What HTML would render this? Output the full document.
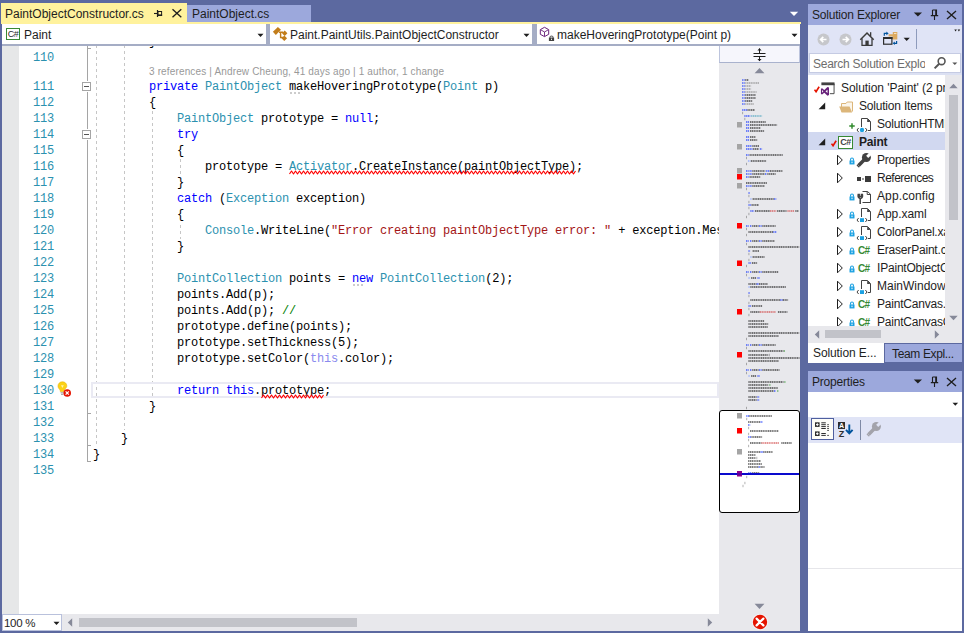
<!DOCTYPE html>
<html>
<head>
<meta charset="utf-8">
<title>PaintObjectConstructor.cs</title>
<style>
html,body{margin:0;padding:0;}
body{width:964px;height:633px;overflow:hidden;background:#5c69a0;position:relative;font-family:"Liberation Sans",sans-serif;font-size:12px;color:#1e1e1e;}
.abs{position:absolute;}
.ui{font-family:"Liberation Sans",sans-serif;font-size:12px;color:#1e1e1e;white-space:nowrap;line-height:14px;}
/* tabs */
#tabA{left:1px;top:3px;width:186px;height:21px;background:#fff29d;}
#tabB{left:187px;top:5px;width:124px;height:17px;background:#9ca8dc;}
#tabline{left:2px;top:22px;width:799px;height:2px;background:#fff29d;}
/* navbar */
#nav{left:2px;top:24px;width:798px;height:22px;background:#a5adc5;}
.dd{top:24px;height:20px;background:#fff;}
/* editor */
#editor{left:2px;top:46px;width:717px;height:568px;background:#fff;overflow:hidden;}
#lmargin{left:0;top:0;width:17px;height:568px;background:#e6e7e8;}
.ln{left:20px;width:32px;text-align:right;color:#2b91af;}
.code,.ln{position:absolute;font-family:"Liberation Mono",monospace;font-size:12px;letter-spacing:-0.2px;line-height:16px;height:16px;white-space:pre;}
.code{left:91px;color:#000;}
.k{color:#0000ff;}
.kf{color:#8a8aee;}
.t{color:#2b91af;}
.s{color:#a31515;}
.c{color:#008000;}
.guide{position:absolute;width:1px;background-image:linear-gradient(to bottom,#c6c6c6 0,#c6c6c6 3px,transparent 3px,transparent 6px);background-size:1px 6px;background-repeat:repeat-y;}
#lens{font-family:"Liberation Sans",sans-serif;font-size:10px;letter-spacing:0.15px;line-height:14px;color:#999;white-space:nowrap;}
/* minimap */
#mini{left:719px;top:46px;width:81px;height:585px;background:#e8e8ec;}
/* bottom bar */
#hbar{left:2px;top:614px;width:718px;height:17px;background:#e8e8ec;}
/* right panels */
.ptitle{background:#9ca8dc;}
.ptool{background:#e0e4f6;}
.row{position:absolute;left:0;width:137px;height:18px;}
.row span{position:absolute;top:2px;font-size:12px;line-height:14px;white-space:nowrap;}
</style>
</head>
<body>

<!-- ===== document tabs ===== -->
<div id="tabA" class="abs"></div>
<div id="tabB" class="abs"></div>
<div id="tabline" class="abs"></div>
<div class="abs ui" style="left:5px;top:7px;">PaintObjectConstructor.cs</div>
<div class="abs ui" style="left:192px;top:7px;">PaintObject.cs</div>

<!-- ===== nav bar ===== -->
<div id="nav" class="abs"></div>
<div class="abs dd" style="left:2px;width:264px;"></div>
<div class="abs dd" style="left:270px;width:262px;"></div>
<div class="abs dd" style="left:537px;width:263px;"></div>
<div class="abs ui" style="left:24px;top:28px;">Paint</div>
<div class="abs ui" style="left:290px;top:28px;">Paint.PaintUtils.PaintObjectConstructor</div>
<div class="abs ui" style="left:557px;top:28px;">makeHoveringPrototype(Point p)</div>

<!-- tab pin -->
<svg class="abs" style="left:153px;top:9px" width="11" height="10" viewBox="0 0 11 10">
<path d="M1 4.5 H4.5" stroke="#1e1e1e" stroke-width="1.1" fill="none"/>
<path d="M4.5 1 V8" stroke="#1e1e1e" stroke-width="1.2" fill="none"/>
<rect x="5" y="2.5" width="3.6" height="4" fill="none" stroke="#1e1e1e" stroke-width="1"/>
<rect x="4.6" y="5.4" width="4.5" height="1.6" fill="#1e1e1e"/>
</svg>
<!-- tab close X -->
<svg class="abs" style="left:171px;top:8px" width="12" height="11" viewBox="0 0 12 11">
<path d="M1.5 1.3 L10.3 9.2 M10.3 1.3 L1.5 9.2" stroke="#1e1e1e" stroke-width="1.35" fill="none"/>
</svg>
<!-- tab overflow arrow (white) -->
<svg class="abs" style="left:789px;top:11px" width="10" height="6" viewBox="0 0 10 6"><path d="M0.8 0.8 H9.2 L5 5 Z" fill="#ffffff"/></svg>
<!-- C# project icon in nav -->
<div class="abs" style="left:6px;top:28px;width:12px;height:10px;border:1px solid #388a34;background:#fff;"></div>
<div class="abs" style="left:7px;top:29px;width:12px;height:10px;font-family:'Liberation Sans',sans-serif;font-weight:normal;font-size:9px;line-height:10px;letter-spacing:-0.6px;color:#2d2d2d;text-align:center;">C#</div>
<!-- class icon -->
<svg class="abs" style="left:272px;top:26px" width="16" height="16" viewBox="0 0 16 16">
<path d="M5.9 1 L9 3.7 L3.8 9 L0.9 5.8 Z" fill="#c27d1a"/>
<path d="M7 6.3 H11 M8.6 6.3 V11.5 H11" stroke="#c27d1a" stroke-width="1.4" fill="none"/>
<path d="M12.7 4.5 L15.4 7.2 L12.7 9.9 L10 7.2 Z" fill="#c27d1a"/>
<path d="M12.3 9.5 L15.1 12.3 L12.3 15.1 L9.5 12.3 Z" fill="#c27d1a"/>
</svg>
<!-- method icon (private) -->
<svg class="abs" style="left:538px;top:26px" width="18" height="16" viewBox="0 0 18 16">
<path d="M6.5 1.3 L10.7 3.6 V8.3 L6.5 10.6 L2.3 8.3 V3.6 Z" fill="#fff" stroke="#68217a" stroke-width="1"/>
<path d="M6.5 10.4 V6 L2.9 3.9 M6.5 6 L10.1 3.9" stroke="#68217a" stroke-width="0.9" fill="none"/>
<rect x="10.9" y="11.6" width="5.2" height="3.4" fill="#424242"/>
<path d="M12 11.8 V10.9 Q12 10.1 13.5 10.1 Q15 10.1 15 10.9 V11.8" stroke="#424242" stroke-width="1" fill="none"/>
<rect x="13" y="12.7" width="1" height="1.2" fill="#fff"/>
</svg>
<!-- nav dropdown arrows -->
<svg class="abs" style="left:257px;top:33px" width="8" height="5" viewBox="0 0 8 5"><path d="M0.5 0.8 H6.5 L3.5 4 Z" fill="#1e1e1e"/></svg>
<svg class="abs" style="left:523px;top:33px" width="8" height="5" viewBox="0 0 8 5"><path d="M0.5 0.8 H6.5 L3.5 4 Z" fill="#1e1e1e"/></svg>
<svg class="abs" style="left:791px;top:33px" width="8" height="5" viewBox="0 0 8 5"><path d="M0.5 0.8 H6.5 L3.5 4 Z" fill="#1e1e1e"/></svg>

<!-- ===== editor ===== -->
<div id="editor" class="abs">
  <div id="lmargin" class="abs"></div>
  <div class="code" style="top:-12px">        }</div>
<div class="ln" style="top:4px">110</div>
<div class="ln" style="top:33px">111</div>
<div class="code" style="top:33px">        <span class="k">private</span> <span class="t">PaintObject</span> makeHoveringPrototype(<span class="t">Point</span> p)</div>
<div class="ln" style="top:49px">112</div>
<div class="code" style="top:49px">        {</div>
<div class="ln" style="top:65px">113</div>
<div class="code" style="top:65px">            <span class="t">PaintObject</span> prototype = <span class="k">null</span>;</div>
<div class="ln" style="top:81px">114</div>
<div class="code" style="top:81px">            <span class="k">try</span></div>
<div class="ln" style="top:97px">115</div>
<div class="code" style="top:97px">            {</div>
<div class="ln" style="top:113px">116</div>
<div class="code" style="top:113px">                prototype = <span class="t">Activator</span>.CreateInstance(paintObjectType);</div>
<div class="ln" style="top:129px">117</div>
<div class="code" style="top:129px">            }</div>
<div class="ln" style="top:145px">118</div>
<div class="code" style="top:145px">            <span class="k">catch</span> (<span class="t">Exception</span> exception)</div>
<div class="ln" style="top:161px">119</div>
<div class="code" style="top:161px">            {</div>
<div class="ln" style="top:177px">120</div>
<div class="code" style="top:177px">                <span class="t">Console</span>.WriteLine(<span class="s">&quot;Error creating paintObjectType error: &quot;</span> + exception.Message);</div>
<div class="ln" style="top:193px">121</div>
<div class="code" style="top:193px">            }</div>
<div class="ln" style="top:209px">122</div>
<div class="ln" style="top:225px">123</div>
<div class="code" style="top:225px">            <span class="t">PointCollection</span> points = <span class="k">new</span> <span class="t">PointCollection</span>(2);</div>
<div class="ln" style="top:241px">124</div>
<div class="code" style="top:241px">            points.Add(p);</div>
<div class="ln" style="top:257px">125</div>
<div class="code" style="top:257px">            points.Add(p); <span class="c">//</span></div>
<div class="ln" style="top:273px">126</div>
<div class="code" style="top:273px">            prototype.define(points);</div>
<div class="ln" style="top:289px">127</div>
<div class="code" style="top:289px">            prototype.setThickness(5);</div>
<div class="ln" style="top:305px">128</div>
<div class="code" style="top:305px">            prototype.setColor(<span class="kf">this</span>.color);</div>
<div class="ln" style="top:321px">129</div>
<div class="ln" style="top:337px">130</div>
<div class="code" style="top:337px">            <span class="k">return</span> <span class="k">this</span>.prototype;</div>
<div class="ln" style="top:353px">131</div>
<div class="code" style="top:353px">        }</div>
<div class="ln" style="top:369px">132</div>
<div class="ln" style="top:385px">133</div>
<div class="code" style="top:385px">    }</div>
<div class="ln" style="top:401px">134</div>
<div class="code" style="top:401px">}</div>
<div class="ln" style="top:417px">135</div><div class="guide" style="left:94px;top:0px;height:399px;background-position:0 5px"></div>
<div class="guide" style="left:122px;top:0px;height:384px;background-position:0 5px"></div>
<div class="guide" style="left:150px;top:65px;height:288px;background-position:0 0px"></div>
<div class="guide" style="left:178px;top:113px;height:16px;background-position:0 0px"></div>
<div class="guide" style="left:178px;top:177px;height:16px;background-position:0 2px"></div>
<div class="abs" style="left:85px;top:0px;width:1px;height:35px;background:#a5a5a5"></div>
<div class="abs" style="left:85px;top:46px;width:1px;height:37px;background:#a5a5a5"></div>
<div class="abs" style="left:85px;top:94px;width:1px;height:322px;background:#a5a5a5"></div>
<div class="abs" style="left:85px;top:2px;width:4px;height:1px;background:#a5a5a5"></div>
<div class="abs" style="left:85px;top:367px;width:4px;height:1px;background:#a5a5a5"></div>
<div class="abs" style="left:85px;top:399px;width:4px;height:1px;background:#a5a5a5"></div>
<div class="abs" style="left:85px;top:415px;width:4px;height:1px;background:#a5a5a5"></div>
<div class="abs" style="left:80px;top:36px;width:7px;height:7px;border:1px solid #a5a5a5;background:#fff"><div class="abs" style="left:1px;top:3px;width:5px;height:1px;background:#555"></div></div>
<div class="abs" style="left:80px;top:84px;width:7px;height:7px;border:1px solid #a5a5a5;background:#fff"><div class="abs" style="left:1px;top:3px;width:5px;height:1px;background:#555"></div></div>
<div class="abs" id="lens" style="left:147px;top:19px;">3 references | Andrew Cheung, 41 days ago | 1 author, 1 change</div>
<div class="abs" style="left:89px;top:336px;width:624px;height:12px;border:2px solid #eaeaf3;"></div>
<svg class="abs" style="left:0;top:0" width="717" height="568" shape-rendering="auto"><path d="M287.5 128 L289.5 125 L291.5 128 L293.5 125 L295.5 128 L297.5 125 L299.5 128 L301.5 125 L303.5 128 L305.5 125 L307.5 128 L309.5 125 L311.5 128 L313.5 125 L315.5 128 L317.5 125 L319.5 128 L321.5 125 L323.5 128 L325.5 125 L327.5 128 L329.5 125 L331.5 128 L333.5 125 L335.5 128 L337.5 125 L339.5 128 L341.5 125 L343.5 128 L345.5 125 L347.5 128 L349.5 125 L351.5 128 L353.5 125 L355.5 128 L357.5 125 L359.5 128 L361.5 125 L363.5 128 L365.5 125 L367.5 128 L369.5 125 L371.5 128 L373.5 125 L375.5 128 L377.5 125 L379.5 128 L381.5 125 L383.5 128 L385.5 125 L387.5 128 L389.5 125 L391.5 128 L393.5 125 L395.5 128 L397.5 125 L399.5 128 L401.5 125 L403.5 128 L405.5 125 L407.5 128 L409.5 125 L411.5 128 L413.5 125 L415.5 128 L417.5 125 L419.5 128 L421.5 125 L423.5 128 L425.5 125 L427.5 128 L429.5 125 L431.5 128 L433.5 125 L435.5 128 L437.5 125 L439.5 128 L441.5 125 L443.5 128 L445.5 125 L447.5 128 L449.5 125 L451.5 128 L453.5 125 L455.5 128 L457.5 125 L459.5 128 L461.5 125 L463.5 128 L465.5 125 L467.5 128 L469.5 125 L471.5 128 L473.5 125 L475.5 128 L477.5 125 L479.5 128 L481.5 125 L483.5 128 L485.5 125 L487.5 128 L489.5 125 L491.5 128 L493.5 125 L495.5 128 L497.5 125 L499.5 128 L501.5 125 L503.5 128 L505.5 125 L507.5 128 L509.5 125 L511.5 128 L513.5 125 L515.5 128 L517.5 125 L519.5 128 L521.5 125 L523.5 128 L525.5 125 L527.5 128 L529.5 125 L531.5 128 L533.5 125 L535.5 128 L537.5 125 L539.5 128 L541.5 125 L543.5 128 L545.5 125 L547.5 128 L549.5 125 L551.5 128 L553.5 125 L555.5 128 L557.5 125 L559.5 128 L561.5 125 L563.5 128 L565.5 125 L567.5 128 L569.5 125 L571.5 128 L573.5 125" fill="none" stroke="#ff0000" stroke-width="1.15" stroke-linejoin="round"/><path d="M259.5 352 L261.5 349 L263.5 352 L265.5 349 L267.5 352 L269.5 349 L271.5 352 L273.5 349 L275.5 352 L277.5 349 L279.5 352 L281.5 349 L283.5 352 L285.5 349 L287.5 352 L289.5 349 L291.5 352 L293.5 349 L295.5 352 L297.5 349 L299.5 352 L301.5 349 L303.5 352 L305.5 349 L307.5 352 L309.5 349 L311.5 352 L313.5 349 L315.5 352 L317.5 349 L319.5 352 L321.5 349" fill="none" stroke="#ff0000" stroke-width="1.15" stroke-linejoin="round"/><rect x="288" y="46.5" width="2" height="1" fill="#9a9a9a"/><rect x="292" y="46.5" width="2" height="1" fill="#9a9a9a"/><rect x="296" y="46.5" width="2" height="1" fill="#9a9a9a"/><rect x="351" y="238.5" width="2" height="1" fill="#9a9a9a"/><rect x="355" y="238.5" width="2" height="1" fill="#9a9a9a"/><rect x="359" y="238.5" width="2" height="1" fill="#9a9a9a"/></svg>
<svg class="abs" style="left:55px;top:335px" width="16" height="18" viewBox="0 0 16 18">
<path d="M5.5 0.8 C2.6 0.8 1 2.9 1 5 C1 6.6 1.9 7.5 2.7 8.6 C3.2 9.3 3.3 9.8 3.3 10.6 L6.6 10.6 C6.7 9.6 7.2 9 8 8 C9 6.9 9.8 6.2 9.8 4.8 C9.8 2.6 8 0.8 5.5 0.8 Z" fill="#fcd116" stroke="#e8b708" stroke-width="0.6"/>
<path d="M4 4.2 L6.8 4.2 L5.4 7 Z" fill="#fff4b0"/>
<rect x="3.6" y="11.3" width="3" height="1" fill="#9a9a9a"/><rect x="4" y="12.8" width="2.2" height="1" fill="#9a9a9a"/>
<circle cx="10.2" cy="12" r="3.8" fill="#e51400"/>
<path d="M8.6 10.4 L11.8 13.6 M11.8 10.4 L8.6 13.6" stroke="#fff" stroke-width="1.3"/>
</svg>
</div>

<!-- ===== minimap ===== -->
<div id="mini" class="abs"><div class="abs" style="left:0;top:0;width:79px;height:16px;background:#f6f6fc;border:1px solid #bcc4dd;border-top:none;border-bottom:1px solid #a9b2cd;"></div>
<svg class="abs" style="left:34px;top:1px" width="13" height="15" viewBox="0 0 13 15"><path d="M0.5 6.5 H12.5 M0.5 9.5 H12.5" stroke="#1e1e1e" stroke-width="1"/><path d="M6.5 1.5 V6 M6.5 10 V14" stroke="#1e1e1e" stroke-width="1"/><path d="M4.4 3.6 L6.5 1.2 L8.6 3.6 Z M4.4 11.9 L6.5 14.3 L8.6 11.9 Z" fill="#1e1e1e"/></svg>
<svg class="abs" style="left:35px;top:21px" width="11" height="7" viewBox="0 0 11 7"><path d="M0.6 6.2 L5.5 0.9 L10.4 6.2 Z" fill="#868999"/></svg>
<svg class="abs" style="left:35px;top:557px" width="11" height="7" viewBox="0 0 11 7"><path d="M0.6 0.8 L5.5 6.1 L10.4 0.8 Z" fill="#868999"/></svg>
<svg class="abs" style="left:32px;top:567px" width="18" height="18" viewBox="0 0 18 18"><circle cx="9" cy="9" r="8" fill="#f4f4f8"/><circle cx="9" cy="9" r="7.2" fill="#e51400"/><path d="M5.6 5.6 L12.4 12.4 M12.4 5.6 L5.6 12.4" stroke="#fff" stroke-width="2.2" stroke-linecap="round"/></svg>
<div class="abs" style="left:0;top:364px;width:79px;height:101px;background:#fff;border:1px solid #000;border-radius:3px;"></div>
<svg class="abs" style="left:0;top:0" width="81" height="585"><path d="M23.1 34.0 h2.6" stroke="#1030ff" stroke-width="1.45" stroke-dasharray="1.3 0.5" opacity="0.75"/><path d="M26.2 34.0 h3.5" stroke="#111111" stroke-width="1.45" stroke-dasharray="1.3 0.5" opacity="0.72"/><path d="M23.1 37.0 h2.6" stroke="#1030ff" stroke-width="1.45" stroke-dasharray="1.3 0.5" opacity="0.75"/><path d="M26.2 37.0 h13.8" stroke="#8a8a8a" stroke-width="1.45" stroke-dasharray="1.3 0.5" opacity="0.75"/><path d="M23.1 40.0 h2.6" stroke="#1030ff" stroke-width="1.45" stroke-dasharray="1.3 0.5" opacity="0.75"/><path d="M26.2 40.0 h5.9" stroke="#8a8a8a" stroke-width="1.45" stroke-dasharray="1.3 0.5" opacity="0.75"/><path d="M23.1 43.0 h2.6" stroke="#1030ff" stroke-width="1.45" stroke-dasharray="1.3 0.5" opacity="0.75"/><path d="M26.2 43.0 h5.9" stroke="#8a8a8a" stroke-width="1.45" stroke-dasharray="1.3 0.5" opacity="0.75"/><path d="M23.1 46.0 h2.6" stroke="#1030ff" stroke-width="1.45" stroke-dasharray="1.3 0.5" opacity="0.75"/><path d="M26.2 46.0 h11.4" stroke="#8a8a8a" stroke-width="1.45" stroke-dasharray="1.3 0.5" opacity="0.75"/><path d="M23.1 49.0 h2.6" stroke="#1030ff" stroke-width="1.45" stroke-dasharray="1.3 0.5" opacity="0.75"/><path d="M26.2 49.0 h10.6" stroke="#111111" stroke-width="1.45" stroke-dasharray="1.3 0.5" opacity="0.72"/><path d="M23.1 52.0 h2.6" stroke="#1030ff" stroke-width="1.45" stroke-dasharray="1.3 0.5" opacity="0.75"/><path d="M26.2 52.0 h10.6" stroke="#111111" stroke-width="1.45" stroke-dasharray="1.3 0.5" opacity="0.72"/><path d="M23.1 55.0 h2.6" stroke="#1030ff" stroke-width="1.45" stroke-dasharray="1.3 0.5" opacity="0.75"/><path d="M26.2 55.0 h7.4" stroke="#111111" stroke-width="1.45" stroke-dasharray="1.3 0.5" opacity="0.72"/><path d="M23.1 58.0 h2.6" stroke="#1030ff" stroke-width="1.45" stroke-dasharray="1.3 0.5" opacity="0.75"/><path d="M26.2 58.0 h9.0" stroke="#8a8a8a" stroke-width="1.45" stroke-dasharray="1.3 0.5" opacity="0.75"/><path d="M23.1 64.0 h5.0" stroke="#1030ff" stroke-width="1.45" stroke-dasharray="1.3 0.5" opacity="0.75"/><path d="M28.4 64.0 h7.6" stroke="#111111" stroke-width="1.45" stroke-dasharray="1.3 0.5" opacity="0.72"/><rect x="23.1" y="65.8" width="1" height="2.4" fill="#555" opacity="0.45"/><path d="M25.3 70.0 h6.0" stroke="#1030ff" stroke-width="1.45" stroke-dasharray="1.3 0.5" opacity="0.75"/><path d="M32.1 70.0 h11.0" stroke="#4aa3bf" stroke-width="1.45" stroke-dasharray="1.3 0.5" opacity="0.75"/><rect x="25.3" y="71.8" width="1" height="2.4" fill="#555" opacity="0.45"/><path d="M27.0 76.0 h3.5" stroke="#1030ff" stroke-width="1.45" stroke-dasharray="1.3 0.5" opacity="0.75"/><path d="M31.0 76.0 h16.1" stroke="#111111" stroke-width="1.45" stroke-dasharray="1.3 0.5" opacity="0.72"/><path d="M27.0 79.0 h3.5" stroke="#1030ff" stroke-width="1.45" stroke-dasharray="1.3 0.5" opacity="0.75"/><path d="M31.0 79.0 h27.1" stroke="#111111" stroke-width="1.45" stroke-dasharray="1.3 0.5" opacity="0.72"/><path d="M27.0 82.0 h3.5" stroke="#1030ff" stroke-width="1.45" stroke-dasharray="1.3 0.5" opacity="0.75"/><path d="M31.0 82.0 h10.5" stroke="#111111" stroke-width="1.45" stroke-dasharray="1.3 0.5" opacity="0.72"/><path d="M27.0 85.0 h3.5" stroke="#1030ff" stroke-width="1.45" stroke-dasharray="1.3 0.5" opacity="0.75"/><path d="M31.0 85.0 h14.5" stroke="#111111" stroke-width="1.45" stroke-dasharray="1.3 0.5" opacity="0.72"/><path d="M27.0 91.0 h3.5" stroke="#1030ff" stroke-width="1.45" stroke-dasharray="1.3 0.5" opacity="0.75"/><path d="M31.0 91.0 h5.8" stroke="#111111" stroke-width="1.45" stroke-dasharray="1.3 0.5" opacity="0.72"/><path d="M27.0 94.0 h3.5" stroke="#1030ff" stroke-width="1.45" stroke-dasharray="1.3 0.5" opacity="0.75"/><path d="M31.0 94.0 h7.4" stroke="#111111" stroke-width="1.45" stroke-dasharray="1.3 0.5" opacity="0.72"/><path d="M27.0 100.0 h5.9" stroke="#1030ff" stroke-width="1.45" stroke-dasharray="1.3 0.5" opacity="0.75"/><path d="M33.3 100.0 h6.7" stroke="#111111" stroke-width="1.45" stroke-dasharray="1.3 0.5" opacity="0.72"/><path d="M27.0 103.0 h6.6" stroke="#1030ff" stroke-width="1.45" stroke-dasharray="1.3 0.5" opacity="0.75"/><path d="M34.1 103.0 h5.9" stroke="#111111" stroke-width="1.45" stroke-dasharray="1.3 0.5" opacity="0.72"/><path d="M40.8 103.0 h2.3" stroke="#1030ff" stroke-width="1.45" stroke-dasharray="1.3 0.5" opacity="0.75"/><path d="M27.0 109.0 h2.7" stroke="#1030ff" stroke-width="1.45" stroke-dasharray="1.3 0.5" opacity="0.75"/><path d="M30.5 109.0 h33.2" stroke="#111111" stroke-width="1.45" stroke-dasharray="1.3 0.5" opacity="0.72"/><rect x="27.0" y="110.8" width="1" height="2.4" fill="#555" opacity="0.45"/><path d="M28.9 115.0 h2.4" stroke="#7f9cff" stroke-width="1.45" stroke-dasharray="1.3 0.5" opacity="0.75"/><path d="M31.8 115.0 h15.3" stroke="#111111" stroke-width="1.45" stroke-dasharray="1.3 0.5" opacity="0.72"/><rect x="27.0" y="116.8" width="1" height="2.4" fill="#555" opacity="0.45"/><path d="M27.0 125.0 h2.7" stroke="#1030ff" stroke-width="1.45" stroke-dasharray="1.3 0.5" opacity="0.75"/><path d="M30.5 125.0 h2.4" stroke="#1030ff" stroke-width="1.45" stroke-dasharray="1.3 0.5" opacity="0.75"/><path d="M33.3 125.0 h13.0" stroke="#111111" stroke-width="1.45" stroke-dasharray="1.3 0.5" opacity="0.72"/><path d="M47.1 125.0 h3.1" stroke="#1030ff" stroke-width="1.45" stroke-dasharray="1.3 0.5" opacity="0.75"/><path d="M50.7 125.0 h13.0" stroke="#111111" stroke-width="1.45" stroke-dasharray="1.3 0.5" opacity="0.72"/><path d="M27.0 128.0 h2.7" stroke="#1030ff" stroke-width="1.45" stroke-dasharray="1.3 0.5" opacity="0.75"/><path d="M30.5 128.0 h2.4" stroke="#1030ff" stroke-width="1.45" stroke-dasharray="1.3 0.5" opacity="0.75"/><path d="M33.3 128.0 h12.2" stroke="#111111" stroke-width="1.45" stroke-dasharray="1.3 0.5" opacity="0.72"/><path d="M46.0 128.0 h1.9" stroke="#1030ff" stroke-width="1.45" stroke-dasharray="1.3 0.5" opacity="0.75"/><path d="M48.3 128.0 h8.3" stroke="#111111" stroke-width="1.45" stroke-dasharray="1.3 0.5" opacity="0.72"/><path d="M27.0 131.0 h2.7" stroke="#1030ff" stroke-width="1.45" stroke-dasharray="1.3 0.5" opacity="0.75"/><path d="M30.5 131.0 h11.0" stroke="#111111" stroke-width="1.45" stroke-dasharray="1.3 0.5" opacity="0.72"/><path d="M27.0 137.0 h20.9" stroke="#111111" stroke-width="1.45" stroke-dasharray="1.3 0.5" opacity="0.72"/><path d="M27.0 140.0 h2.7" stroke="#1030ff" stroke-width="1.45" stroke-dasharray="1.3 0.5" opacity="0.75"/><path d="M30.5 140.0 h2.4" stroke="#1030ff" stroke-width="1.45" stroke-dasharray="1.3 0.5" opacity="0.75"/><path d="M33.3 140.0 h12.2" stroke="#111111" stroke-width="1.45" stroke-dasharray="1.3 0.5" opacity="0.72"/><rect x="27.0" y="141.8" width="1" height="2.4" fill="#555" opacity="0.45"/><path d="M29.4 147.0 h1.6" stroke="#1030ff" stroke-width="1.45" stroke-dasharray="1.3 0.5" opacity="0.75"/><rect x="29.4" y="148.8" width="1" height="2.4" fill="#555" opacity="0.45"/><path d="M31.3 153.0 h1.6" stroke="#7f9cff" stroke-width="1.45" stroke-dasharray="1.3 0.5" opacity="0.75"/><path d="M33.6 153.0 h21.4" stroke="#111111" stroke-width="1.45" stroke-dasharray="1.3 0.5" opacity="0.72"/><path d="M55.0 153.0 h2.3" stroke="#1030ff" stroke-width="1.45" stroke-dasharray="1.3 0.5" opacity="0.75"/><rect x="29.4" y="154.8" width="1" height="2.4" fill="#555" opacity="0.45"/><path d="M29.4 159.0 h2.7" stroke="#1030ff" stroke-width="1.45" stroke-dasharray="1.3 0.5" opacity="0.75"/><path d="M32.5 159.0 h7.5" stroke="#111111" stroke-width="1.45" stroke-dasharray="1.3 0.5" opacity="0.72"/><rect x="29.4" y="160.8" width="1" height="2.4" fill="#555" opacity="0.45"/><path d="M31.3 165.0 h3.9" stroke="#1030ff" stroke-width="1.45" stroke-dasharray="1.3 0.5" opacity="0.75"/><path d="M36.0 165.0 h15.0" stroke="#111111" stroke-width="1.45" stroke-dasharray="1.3 0.5" opacity="0.72"/><path d="M51.0 165.0 h6.3" stroke="#d04040" stroke-width="1.45" stroke-dasharray="1.3 0.5" opacity="0.75"/><path d="M58.1 165.0 h9.5" stroke="#111111" stroke-width="1.45" stroke-dasharray="1.3 0.5" opacity="0.72"/><path d="M68.4 165.0 h7.1" stroke="#d04040" stroke-width="1.45" stroke-dasharray="1.3 0.5" opacity="0.75"/><path d="M76.3 165.0 h3.2" stroke="#111111" stroke-width="1.45" stroke-dasharray="1.3 0.5" opacity="0.72"/><rect x="29.4" y="166.8" width="1" height="2.4" fill="#555" opacity="0.45"/><rect x="27.0" y="169.8" width="1" height="2.4" fill="#555" opacity="0.45"/><path d="M27.0 180.0 h2.7" stroke="#1030ff" stroke-width="1.45" stroke-dasharray="1.3 0.5" opacity="0.75"/><path d="M31.0 180.0 h1.9" stroke="#1030ff" stroke-width="1.45" stroke-dasharray="1.3 0.5" opacity="0.75"/><path d="M33.2 180.0 h6.4" stroke="#111111" stroke-width="1.45" stroke-dasharray="1.3 0.5" opacity="0.72"/><path d="M40.0 180.0 h2.7" stroke="#1030ff" stroke-width="1.45" stroke-dasharray="1.3 0.5" opacity="0.75"/><path d="M43.3 180.0 h13.3" stroke="#111111" stroke-width="1.45" stroke-dasharray="1.3 0.5" opacity="0.72"/><rect x="27.0" y="181.8" width="1" height="2.4" fill="#555" opacity="0.45"/><path d="M29.4 186.0 h24.8" stroke="#111111" stroke-width="1.45" stroke-dasharray="1.3 0.5" opacity="0.72"/><path d="M54.2 186.0 h3.1" stroke="#1030ff" stroke-width="1.45" stroke-dasharray="1.3 0.5" opacity="0.75"/><rect x="27.0" y="187.8" width="1" height="2.4" fill="#555" opacity="0.45"/><path d="M27.0 195.0 h2.7" stroke="#1030ff" stroke-width="1.45" stroke-dasharray="1.3 0.5" opacity="0.75"/><path d="M31.0 195.0 h1.9" stroke="#1030ff" stroke-width="1.45" stroke-dasharray="1.3 0.5" opacity="0.75"/><path d="M33.2 195.0 h6.4" stroke="#111111" stroke-width="1.45" stroke-dasharray="1.3 0.5" opacity="0.72"/><path d="M40.0 195.0 h2.7" stroke="#1030ff" stroke-width="1.45" stroke-dasharray="1.3 0.5" opacity="0.75"/><path d="M43.3 195.0 h12.5" stroke="#111111" stroke-width="1.45" stroke-dasharray="1.3 0.5" opacity="0.72"/><rect x="27.0" y="196.8" width="1" height="2.4" fill="#555" opacity="0.45"/><path d="M29.4 201.0 h50.8" stroke="#111111" stroke-width="1.45" stroke-dasharray="1.3 0.5" opacity="0.72"/><path d="M29.4 205.0 h1.9" stroke="#1030ff" stroke-width="1.45" stroke-dasharray="1.3 0.5" opacity="0.75"/><path d="M33.6 205.0 h6.4" stroke="#111111" stroke-width="1.45" stroke-dasharray="1.3 0.5" opacity="0.72"/><rect x="29.4" y="206.8" width="1" height="2.4" fill="#555" opacity="0.45"/><path d="M31.3 211.0 h1.9" stroke="#7f9cff" stroke-width="1.45" stroke-dasharray="1.3 0.5" opacity="0.75"/><path d="M33.6 211.0 h11.9" stroke="#111111" stroke-width="1.45" stroke-dasharray="1.3 0.5" opacity="0.72"/><rect x="29.4" y="212.8" width="1" height="2.4" fill="#555" opacity="0.45"/><path d="M29.4 217.0 h2.7" stroke="#1030ff" stroke-width="1.45" stroke-dasharray="1.3 0.5" opacity="0.75"/><path d="M32.9 217.0 h5.5" stroke="#111111" stroke-width="1.45" stroke-dasharray="1.3 0.5" opacity="0.72"/><rect x="27.0" y="218.8" width="1" height="2.4" fill="#555" opacity="0.45"/><path d="M27.0 226.0 h2.7" stroke="#1030ff" stroke-width="1.45" stroke-dasharray="1.3 0.5" opacity="0.75"/><path d="M31.0 226.0 h1.9" stroke="#1030ff" stroke-width="1.45" stroke-dasharray="1.3 0.5" opacity="0.75"/><path d="M33.2 226.0 h6.4" stroke="#111111" stroke-width="1.45" stroke-dasharray="1.3 0.5" opacity="0.72"/><path d="M40.0 226.0 h2.7" stroke="#1030ff" stroke-width="1.45" stroke-dasharray="1.3 0.5" opacity="0.75"/><path d="M43.3 226.0 h16.4" stroke="#111111" stroke-width="1.45" stroke-dasharray="1.3 0.5" opacity="0.72"/><rect x="27.0" y="227.8" width="1" height="2.4" fill="#555" opacity="0.45"/><path d="M29.4 232.0 h1.6" stroke="#7f9cff" stroke-width="1.45" stroke-dasharray="1.3 0.5" opacity="0.75"/><path d="M32.1 232.0 h5.5" stroke="#111111" stroke-width="1.45" stroke-dasharray="1.3 0.5" opacity="0.72"/><path d="M38.4 232.0 h2.4" stroke="#1030ff" stroke-width="1.45" stroke-dasharray="1.3 0.5" opacity="0.75"/><path d="M29.4 238.0 h8.2" stroke="#111111" stroke-width="1.45" stroke-dasharray="1.3 0.5" opacity="0.72"/><path d="M37.6 238.0 h2.4" stroke="#1030ff" stroke-width="1.45" stroke-dasharray="1.3 0.5" opacity="0.75"/><path d="M40.0 238.0 h8.7" stroke="#111111" stroke-width="1.45" stroke-dasharray="1.3 0.5" opacity="0.72"/><path d="M29.4 241.0 h1.9" stroke="#7f9cff" stroke-width="1.45" stroke-dasharray="1.3 0.5" opacity="0.75"/><path d="M31.3 241.0 h35.5" stroke="#111111" stroke-width="1.45" stroke-dasharray="1.3 0.5" opacity="0.72"/><path d="M29.4 247.0 h1.6" stroke="#1030ff" stroke-width="1.45" stroke-dasharray="1.3 0.5" opacity="0.75"/><rect x="29.4" y="248.8" width="1" height="2.4" fill="#555" opacity="0.45"/><path d="M31.3 254.0 h30.0" stroke="#111111" stroke-width="1.45" stroke-dasharray="1.3 0.5" opacity="0.72"/><path d="M61.3 254.0 h2.4" stroke="#1030ff" stroke-width="1.45" stroke-dasharray="1.3 0.5" opacity="0.75"/><path d="M63.7 254.0 h5.5" stroke="#111111" stroke-width="1.45" stroke-dasharray="1.3 0.5" opacity="0.72"/><rect x="29.4" y="255.8" width="1" height="2.4" fill="#555" opacity="0.45"/><path d="M29.4 260.0 h2.7" stroke="#1030ff" stroke-width="1.45" stroke-dasharray="1.3 0.5" opacity="0.75"/><path d="M32.9 260.0 h10.2" stroke="#111111" stroke-width="1.45" stroke-dasharray="1.3 0.5" opacity="0.72"/><rect x="29.4" y="261.8" width="1" height="2.4" fill="#555" opacity="0.45"/><path d="M31.3 266.0 h9.5" stroke="#111111" stroke-width="1.45" stroke-dasharray="1.3 0.5" opacity="0.72"/><path d="M40.8 266.0 h15.8" stroke="#d04040" stroke-width="1.45" stroke-dasharray="1.3 0.5" opacity="0.75"/><path d="M58.9 266.0 h9.5" stroke="#111111" stroke-width="1.45" stroke-dasharray="1.3 0.5" opacity="0.72"/><rect x="29.4" y="267.8" width="1" height="2.4" fill="#555" opacity="0.45"/><path d="M29.4 275.0 h16.1" stroke="#111111" stroke-width="1.45" stroke-dasharray="1.3 0.5" opacity="0.72"/><path d="M29.4 278.0 h20.0" stroke="#111111" stroke-width="1.45" stroke-dasharray="1.3 0.5" opacity="0.72"/><path d="M29.4 281.0 h19.3" stroke="#111111" stroke-width="1.45" stroke-dasharray="1.3 0.5" opacity="0.72"/><path d="M29.4 287.0 h50.8" stroke="#111111" stroke-width="1.45" stroke-dasharray="1.3 0.5" opacity="0.72"/><path d="M29.4 290.0 h30.3" stroke="#111111" stroke-width="1.45" stroke-dasharray="1.3 0.5" opacity="0.72"/><rect x="27.0" y="291.8" width="1" height="2.4" fill="#555" opacity="0.45"/><path d="M27.0 299.0 h2.7" stroke="#1030ff" stroke-width="1.45" stroke-dasharray="1.3 0.5" opacity="0.75"/><path d="M31.0 299.0 h1.9" stroke="#1030ff" stroke-width="1.45" stroke-dasharray="1.3 0.5" opacity="0.75"/><path d="M33.2 299.0 h6.4" stroke="#111111" stroke-width="1.45" stroke-dasharray="1.3 0.5" opacity="0.72"/><path d="M40.0 299.0 h2.7" stroke="#1030ff" stroke-width="1.45" stroke-dasharray="1.3 0.5" opacity="0.75"/><path d="M43.3 299.0 h13.3" stroke="#111111" stroke-width="1.45" stroke-dasharray="1.3 0.5" opacity="0.72"/><rect x="27.0" y="300.8" width="1" height="2.4" fill="#555" opacity="0.45"/><path d="M29.4 305.0 h35.1" stroke="#111111" stroke-width="1.45" stroke-dasharray="1.3 0.5" opacity="0.72"/><path d="M64.8 305.0 h1.2" stroke="#3a9a3a" stroke-width="1.45" stroke-dasharray="1.3 0.5" opacity="0.75"/><path d="M29.4 309.0 h20.0" stroke="#111111" stroke-width="1.45" stroke-dasharray="1.3 0.5" opacity="0.72"/><rect x="49.9" y="307.8" width="1" height="2.4" fill="#555" opacity="0.45"/><path d="M29.4 312.0 h51.1" stroke="#111111" stroke-width="1.45" stroke-dasharray="1.3 0.5" opacity="0.72"/><path d="M29.4 315.0 h30.3" stroke="#111111" stroke-width="1.45" stroke-dasharray="1.3 0.5" opacity="0.72"/><rect x="27.0" y="316.8" width="1" height="2.4" fill="#555" opacity="0.45"/><path d="M27.0 324.0 h2.7" stroke="#1030ff" stroke-width="1.45" stroke-dasharray="1.3 0.5" opacity="0.75"/><path d="M31.0 324.0 h1.9" stroke="#1030ff" stroke-width="1.45" stroke-dasharray="1.3 0.5" opacity="0.75"/><path d="M33.2 324.0 h6.4" stroke="#111111" stroke-width="1.45" stroke-dasharray="1.3 0.5" opacity="0.72"/><path d="M40.0 324.0 h2.7" stroke="#1030ff" stroke-width="1.45" stroke-dasharray="1.3 0.5" opacity="0.75"/><path d="M43.3 324.0 h17.2" stroke="#111111" stroke-width="1.45" stroke-dasharray="1.3 0.5" opacity="0.72"/><rect x="27.0" y="325.8" width="1" height="2.4" fill="#555" opacity="0.45"/><path d="M29.4 330.0 h1.6" stroke="#7f9cff" stroke-width="1.45" stroke-dasharray="1.3 0.5" opacity="0.75"/><path d="M32.1 330.0 h5.5" stroke="#111111" stroke-width="1.45" stroke-dasharray="1.3 0.5" opacity="0.72"/><path d="M38.4 330.0 h2.4" stroke="#1030ff" stroke-width="1.45" stroke-dasharray="1.3 0.5" opacity="0.75"/><path d="M29.4 336.0 h35.1" stroke="#111111" stroke-width="1.45" stroke-dasharray="1.3 0.5" opacity="0.72"/><path d="M65.2 336.0 h1.6" stroke="#3a9a3a" stroke-width="1.45" stroke-dasharray="1.3 0.5" opacity="0.75"/><path d="M29.4 339.0 h20.0" stroke="#111111" stroke-width="1.45" stroke-dasharray="1.3 0.5" opacity="0.72"/><path d="M50.2 339.0 h1.6" stroke="#3a9a3a" stroke-width="1.45" stroke-dasharray="1.3 0.5" opacity="0.75"/><path d="M29.4 342.0 h29.5" stroke="#111111" stroke-width="1.45" stroke-dasharray="1.3 0.5" opacity="0.72"/><path d="M29.4 345.0 h25.6" stroke="#111111" stroke-width="1.45" stroke-dasharray="1.3 0.5" opacity="0.72"/><path d="M55.0 345.0 h1.9" stroke="#1030ff" stroke-width="1.45" stroke-dasharray="1.3 0.5" opacity="0.75"/><path d="M58.1 345.0 h1.6" stroke="#3a9a3a" stroke-width="1.45" stroke-dasharray="1.3 0.5" opacity="0.75"/><path d="M29.4 351.0 h8.2" stroke="#111111" stroke-width="1.45" stroke-dasharray="1.3 0.5" opacity="0.72"/><path d="M38.4 351.0 h2.0" stroke="#1030ff" stroke-width="1.45" stroke-dasharray="1.3 0.5" opacity="0.75"/><path d="M29.4 354.0 h8.2" stroke="#111111" stroke-width="1.45" stroke-dasharray="1.3 0.5" opacity="0.72"/><path d="M38.4 354.0 h2.0" stroke="#1030ff" stroke-width="1.45" stroke-dasharray="1.3 0.5" opacity="0.75"/><rect x="27.0" y="360.8" width="1" height="2.4" fill="#555" opacity="0.45"/><path d="M27.2 370.0 h2.9" stroke="#1030ff" stroke-width="1.45" stroke-dasharray="1.3 0.5" opacity="0.75"/><path d="M30.3 370.0 h22.5" stroke="#111111" stroke-width="1.45" stroke-dasharray="1.3 0.5" opacity="0.72"/><rect x="27.2" y="371.8" width="1" height="2.4" fill="#555" opacity="0.45"/><path d="M29.1 376.0 h12.0" stroke="#111111" stroke-width="1.45" stroke-dasharray="1.3 0.5" opacity="0.72"/><path d="M41.5 376.0 h2.2" stroke="#1030ff" stroke-width="1.45" stroke-dasharray="1.3 0.5" opacity="0.75"/><path d="M29.1 379.0 h2.1" stroke="#1030ff" stroke-width="1.45" stroke-dasharray="1.3 0.5" opacity="0.75"/><rect x="29.1" y="380.8" width="1" height="2.4" fill="#555" opacity="0.45"/><path d="M31.0 385.0 h28.4" stroke="#111111" stroke-width="1.45" stroke-dasharray="1.3 0.5" opacity="0.72"/><rect x="29.1" y="386.8" width="1" height="2.4" fill="#555" opacity="0.45"/><path d="M29.1 391.0 h2.9" stroke="#1030ff" stroke-width="1.45" stroke-dasharray="1.3 0.5" opacity="0.75"/><path d="M32.4 391.0 h10.9" stroke="#111111" stroke-width="1.45" stroke-dasharray="1.3 0.5" opacity="0.72"/><rect x="29.1" y="392.8" width="1" height="2.4" fill="#555" opacity="0.45"/><path d="M31.0 397.0 h11.4" stroke="#111111" stroke-width="1.45" stroke-dasharray="1.3 0.5" opacity="0.72"/><path d="M42.4 397.0 h18.0" stroke="#d04040" stroke-width="1.45" stroke-dasharray="1.3 0.5" opacity="0.75"/><path d="M62.3 397.0 h10.4" stroke="#111111" stroke-width="1.45" stroke-dasharray="1.3 0.5" opacity="0.72"/><rect x="29.1" y="398.8" width="1" height="2.4" fill="#555" opacity="0.45"/><path d="M29.1 406.0 h12.4" stroke="#111111" stroke-width="1.45" stroke-dasharray="1.3 0.5" opacity="0.72"/><path d="M41.5 406.0 h2.8" stroke="#1030ff" stroke-width="1.45" stroke-dasharray="1.3 0.5" opacity="0.75"/><path d="M44.3 406.0 h9.5" stroke="#111111" stroke-width="1.45" stroke-dasharray="1.3 0.5" opacity="0.72"/><path d="M29.1 409.0 h7.6" stroke="#111111" stroke-width="1.45" stroke-dasharray="1.3 0.5" opacity="0.72"/><path d="M29.1 412.0 h7.6" stroke="#111111" stroke-width="1.45" stroke-dasharray="1.3 0.5" opacity="0.72"/><rect x="37.3" y="410.8" width="1" height="2.4" fill="#555" opacity="0.45"/><path d="M29.1 415.0 h12.9" stroke="#111111" stroke-width="1.45" stroke-dasharray="1.3 0.5" opacity="0.72"/><path d="M29.1 418.0 h13.7" stroke="#111111" stroke-width="1.45" stroke-dasharray="1.3 0.5" opacity="0.72"/><path d="M29.1 421.0 h10.5" stroke="#111111" stroke-width="1.45" stroke-dasharray="1.3 0.5" opacity="0.72"/><path d="M39.6 421.0 h1.9" stroke="#1030ff" stroke-width="1.45" stroke-dasharray="1.3 0.5" opacity="0.75"/><path d="M41.5 421.0 h4.1" stroke="#111111" stroke-width="1.45" stroke-dasharray="1.3 0.5" opacity="0.72"/><path d="M29.1 427.0 h3.8" stroke="#1030ff" stroke-width="1.45" stroke-dasharray="1.3 0.5" opacity="0.75"/><path d="M33.1 427.0 h7.4" stroke="#111111" stroke-width="1.45" stroke-dasharray="1.3 0.5" opacity="0.72"/><rect x="27.2" y="429.8" width="1" height="2.4" fill="#555" opacity="0.45"/><rect x="25.4" y="435.8" width="1" height="2.4" fill="#555" opacity="0.45"/><rect x="23.5" y="438.8" width="1" height="2.4" fill="#555" opacity="0.45"/><rect x="18" y="76.0" width="5" height="5.5" fill="#a5a5a5"/><rect x="18" y="98.0" width="5" height="5.5" fill="#a5a5a5"/><rect x="18" y="122.0" width="5" height="5.5" fill="#a5a5a5"/><rect x="18" y="128.0" width="5" height="5.5" fill="#ff0000"/><rect x="18" y="137.0" width="5" height="5.5" fill="#a5a5a5"/><rect x="18" y="177.0" width="5" height="5.5" fill="#ff0000"/><rect x="18" y="214.5" width="5" height="5.5" fill="#ff0000"/><rect x="18" y="263.0" width="5" height="5.5" fill="#ff0000"/><rect x="18" y="306.0" width="5" height="5.5" fill="#ff0000"/><rect x="18" y="367.0" width="5" height="5.5" fill="#a5a5a5"/><rect x="18" y="382.0" width="5" height="5.5" fill="#ff0000"/><rect x="18" y="403.0" width="5" height="5.5" fill="#a5a5a5"/><rect x="18" y="425.0" width="5" height="5.5" fill="#8b008b"/><rect x="1" y="427" width="79" height="2" fill="#0a0acd"/><rect x="18" y="427.0" width="5" height="2" fill="#5a00a0"/></svg></div>

<!-- ===== bottom bar ===== -->
<div id="hbar" class="abs"><div class="abs" style="left:0;top:0;width:58px;height:15px;background:#fff;border:1px solid #b9c1dc;"></div>
<div class="abs ui" style="left:2px;top:2px;font-size:11.5px;letter-spacing:-0.3px;">100 %</div>
<svg class="abs" style="left:51px;top:7px" width="8" height="5" viewBox="0 0 8 5"><path d="M0.5 0.8 H6.5 L3.5 4 Z" fill="#1e1e1e"/></svg>
<svg class="abs" style="left:65px;top:4px" width="6" height="9" viewBox="0 0 6 9"><path d="M5.2 0.3 L0.8 4.5 L5.2 8.7 Z" fill="#868999"/></svg>
<div class="abs" style="left:77px;top:4px;width:278px;height:9px;background:#c2c3c9"></div>
<svg class="abs" style="left:705px;top:4px" width="6" height="9" viewBox="0 0 6 9"><path d="M0.8 0.3 L5.2 4.5 L0.8 8.7 Z" fill="#868999"/></svg>
</div>

<!-- ===== solution explorer ===== -->
<div id="se" class="abs" style="left:808px;top:4px;width:154px;height:359px;"><svg width="0" height="0" style="position:absolute"><defs>
<symbol id="i-col" viewBox="0 0 8 12"><path d="M1.5 1.2 L6.3 6 L1.5 10.8 Z" fill="#fff" stroke="#1e1e1e" stroke-width="1"/></symbol>
<symbol id="i-exp" viewBox="0 0 8 8"><path d="M7.2 0.6 V7.2 H0.6 Z" fill="#1e1e1e"/></symbol>
<symbol id="i-lock" viewBox="0 0 7 9"><path d="M1.8 4.2 V2.8 Q1.8 0.9 3.5 0.9 Q5.2 0.9 5.2 2.8 V4.2" fill="none" stroke="#1ba1e2" stroke-width="1.25"/><rect x="0.6" y="3.9" width="5.8" height="4.6" fill="#1ba1e2"/><rect x="2.9" y="5.2" width="1.2" height="1.8" fill="#fff"/></symbol>
<symbol id="i-chk" viewBox="0 0 7 8"><path d="M0.6 4.2 L2.4 6.6 L6 0.8" fill="none" stroke="#e51400" stroke-width="1.9"/></symbol>
<symbol id="i-plus" viewBox="0 0 7 7"><path d="M3.5 0.3 V6.7 M0.3 3.5 H6.7" stroke="#2f8a2b" stroke-width="1.7"/></symbol>
<symbol id="i-wrench" viewBox="0 0 16 16"><mask id="wm" maskUnits="userSpaceOnUse" x="0" y="0" width="16" height="16"><rect x="0" y="0" width="16" height="16" fill="#fff"/><path d="M11.2 4.9 L16.5 -0.4" stroke="#000" stroke-width="2.9"/></mask><g fill="currentColor" color="inherit"><g mask="url(#wm)"><circle cx="10.4" cy="5.5" r="4.5"/><path d="M9 7 L2.6 13.4" stroke-width="3.5" stroke-linecap="butt" fill="none" stroke="currentColor"/><path d="M1.2 12.2 L3.9 14.9 L2.6 15.6 L0.6 13.4 Z"/></g></g></symbol>
<symbol id="i-ref" viewBox="0 0 16 16"><rect x="1" y="6" width="4" height="4" fill="#3a3a3a"/><rect x="6" y="7.5" width="2" height="1" fill="#3a3a3a"/><rect x="9" y="5" width="6" height="6" fill="#3a3a3a"/></symbol>
<symbol id="i-xaml" viewBox="0 0 16 16"><path d="M5.5 10 V1.5 H11.5 L14.5 4.5 V13.5 H11.8" fill="#fff" stroke="#424242" stroke-width="1"/><path d="M11.2 1.5 V5 H14.5 Z" fill="#424242"/><rect x="4" y="11.2" width="4" height="3.8" fill="#1ba1e2"/><path d="M2.6 11 L1 13 L2.6 15 M9.4 11 L11 13 L9.4 15" fill="none" stroke="#424242" stroke-width="1"/></symbol>
<symbol id="i-html" viewBox="0 0 16 16"><path d="M5.5 10 V1.5 H11.5 L14.5 4.5 V13.5 H11.8" fill="#fff" stroke="#424242" stroke-width="1"/><path d="M11.2 1.5 V5 H14.5 Z" fill="#424242"/><circle cx="6" cy="13" r="2.2" fill="#1ba1e2"/><path d="M2.6 11 L1 13 L2.6 15 M9.4 11 L11 13 L9.4 15" fill="none" stroke="#424242" stroke-width="1"/></symbol>
<symbol id="i-cfg" viewBox="0 0 16 16"><path d="M6.5 2.5 H11.5 L14.5 5.2 V13.5 H6.5" fill="#fff" stroke="#424242" stroke-width="1"/><path d="M11.2 2.5 V5.5 H14.5" fill="none" stroke="#424242" stroke-width="1"/><path d="M4.2 15 V9.6 C2.6 9 1.8 7.6 2.2 5.6 L3.2 5.6 V7.6 H5.4 V5.6 L6.4 5.6 C6.8 7.6 6 9 4.6 9.6" fill="none" stroke="#424242" stroke-width="1.5"/></symbol>
<symbol id="i-folder" viewBox="0 0 16 14"><path d="M3.5 11.5 V3.5 H8 L9.2 2 H14.5 V11.5" fill="#fbf6ec" stroke="#dcb67a" stroke-width="1"/><path d="M1.2 6.5 H11.5 L14.2 12.5 H3.6 Z" fill="#dcb67a"/></symbol>
<symbol id="i-sln" viewBox="0 0 16 16"><path d="M2 3 H15 V13.5 H10.5" fill="#fff" stroke="#424242" stroke-width="1"/><rect x="1.5" y="1.5" width="14" height="3" fill="#424242"/><path d="M1 8.2 L2.2 7.6 L4.6 9.6 L8 6.4 L9.6 7 V15 L8 15.6 L4.6 12.4 L2.2 14.4 L1 13.8 Z M2.2 9.6 V12.4 L3.6 11 Z M5.9 11 L8 12.8 V9.2 Z" fill="#68217a" fill-rule="evenodd"/></symbol>
</defs></svg>
<div class="abs ptitle" style="left:0;top:0;width:154px;height:21px;"></div>
<div class="abs ui" style="left:4px;top:4px;letter-spacing:-0.2px;">Solution Explorer</div>
<svg class="abs" style="left:105px;top:8px" width="10" height="6" viewBox="0 0 10 6"><path d="M0.8 0.6 H9 L4.9 4.6 Z" fill="#1e1e1e"/></svg>
<svg class="abs" style="left:122px;top:5px" width="9" height="12" viewBox="0 0 9 12"><path d="M2.5 1 H6.5 V6.5 M2.5 1 V6.5 M0.8 6.6 H8.2 M4.5 6.6 V11" fill="none" stroke="#1e1e1e" stroke-width="1.1"/><rect x="5.2" y="1" width="1.6" height="5.6" fill="#1e1e1e"/></svg>
<svg class="abs" style="left:138px;top:6px" width="11" height="10" viewBox="0 0 11 10"><path d="M1 1 L10 9 M10 1 L1 9" stroke="#1e1e1e" stroke-width="1.35" fill="none"/></svg>
<div class="abs ptool" style="left:0;top:21px;width:154px;height:28px;"></div>
<svg class="abs" style="left:9px;top:29px" width="13" height="13" viewBox="0 0 13 13"><circle cx="6.5" cy="6.5" r="6" fill="#c6c7cb"/><path d="M9.5 6.5 H3.8 M6.3 3.8 L3.6 6.5 L6.3 9.2" fill="none" stroke="#fff" stroke-width="1.7"/></svg>
<svg class="abs" style="left:31px;top:29px" width="13" height="13" viewBox="0 0 13 13"><circle cx="6.5" cy="6.5" r="6" fill="#c6c7cb"/><path d="M3.5 6.5 H9.2 M6.7 3.8 L9.4 6.5 L6.7 9.2" fill="none" stroke="#fff" stroke-width="1.7"/></svg>
<svg class="abs" style="left:51px;top:27px" width="16" height="16" viewBox="0 0 16 16"><path d="M1.3 8.8 L8 2 L14.7 8.8" fill="none" stroke="#3a3a3a" stroke-width="1.5"/><path d="M3 7.6 V14.3 H13 V7.6" fill="none" stroke="#3a3a3a" stroke-width="1.3"/><rect x="6.4" y="9.6" width="3.3" height="4.7" fill="#3a3a3a"/><rect x="11" y="1.2" width="1.3" height="4" fill="#3a3a3a"/></svg>
<svg class="abs" style="left:74px;top:27px" width="17" height="16" viewBox="0 0 17 16"><path d="M6.6 3.3 H10.8 V1 H15.3 V8.6 H10.5 V5.5 H6.6 Z" fill="#dca960"/><rect x="12" y="2" width="2.4" height="1" fill="#f5e3c3"/><rect x="1.6" y="6.6" width="8.3" height="6.6" fill="#e0e4f6" stroke="#2d2d2d" stroke-width="1.2"/><rect x="1" y="6" width="9.5" height="2" fill="#2d2d2d"/><path d="M2.3 4.8 V2.4 H5" fill="none" stroke="#00539c" stroke-width="1.2"/><path d="M4.4 0.6 L6.6 2.4 L4.4 4.2 Z" fill="#00539c"/><path d="M14.6 10 V12.3 H12.2" fill="none" stroke="#00539c" stroke-width="1.2"/><path d="M12.8 10.5 L10.6 12.3 L12.8 14.1 Z" fill="#00539c"/></svg>
<svg class="abs" style="left:95px;top:33px" width="8" height="5" viewBox="0 0 8 5"><path d="M0.6 0.8 H6.8 L3.7 4 Z" fill="#1e1e1e"/></svg>
<div class="abs" style="left:108px;top:25px;width:1px;height:20px;background:#8e9bbc"></div>
<svg class="abs" style="left:146px;top:25px" width="7" height="4" viewBox="0 0 7 4"><path d="M0.3 0.5 H2.9 L1.6 2.6 Z M3.6 0.5 H6.2 L4.9 2.6 Z" fill="#1e1e1e"/></svg>
<div class="abs" style="left:0;top:49px;width:154px;height:22px;background:#dbe0f2"></div>
<div class="abs" style="left:1px;top:49px;width:150px;height:18px;background:#fff;border:1px solid #c5cbe3"></div>
<div class="abs ui" style="left:5px;top:53px;color:#6d6d6d;width:112px;overflow:hidden;letter-spacing:-0.25px;">Search Solution Explorer (Ctrl+;)</div>
<svg class="abs" style="left:125px;top:52px" width="14" height="14" viewBox="0 0 14 14"><circle cx="8.6" cy="5.2" r="3.4" fill="none" stroke="#555" stroke-width="1.6"/><path d="M6.2 7.8 L1.6 12.4" stroke="#555" stroke-width="2"/></svg>
<svg class="abs" style="left:144px;top:58px" width="6" height="4" viewBox="0 0 6 4"><path d="M0.3 0.5 H5.3 L2.8 3 Z" fill="#555"/></svg>
<div class="abs" style="left:0;top:71px;width:137px;height:251px;background:#fff;overflow:hidden;">
<svg class="abs" style="color:#424242;left:6px;top:10.5px" width="6" height="7"><use href="#i-chk" width="6" height="7"/></svg>
<svg class="abs" style="color:#424242;left:12px;top:6px" width="15" height="15"><use href="#i-sln" width="15" height="15"/></svg>
<div class="abs ui" style="letter-spacing:-0.05px;left:33px;top:6px;">Solution 'Paint' (2 projects)</div>
<svg class="abs" style="left:10px;top:27px" width="8" height="8"><use href="#i-exp" width="8" height="8"/></svg>
<svg class="abs" style="color:#424242;left:30px;top:24.5px" width="16" height="14"><use href="#i-folder" width="16" height="14"/></svg>
<div class="abs ui" style="letter-spacing:-0.2px;left:51px;top:24px;">Solution Items</div>
<svg class="abs" style="color:#424242;left:41px;top:47.5px" width="6" height="6"><use href="#i-plus" width="6" height="6"/></svg>
<svg class="abs" style="color:#424242;left:48px;top:42px" width="16" height="16"><use href="#i-html" width="16" height="16"/></svg>
<div class="abs ui" style="letter-spacing:-0.2px;left:69px;top:42px;">SolutionHTML.html</div>
<div class="abs" style="left:0;top:57px;width:137px;height:18px;background:#d1d8f0"></div>
<svg class="abs" style="left:10px;top:63px" width="8" height="8"><use href="#i-exp" width="8" height="8"/></svg>
<svg class="abs" style="color:#424242;left:23px;top:64.5px" width="6" height="7"><use href="#i-chk" width="6" height="7"/></svg>
<div class="abs" style="left:30px;top:61px;width:13px;height:11px;border:1px solid #388a34;background:#fff;"></div>
<div class="abs" style="left:31px;top:62px;width:13px;text-align:center;font:bold 9px/11px 'Liberation Sans',sans-serif;letter-spacing:-0.5px;color:#424242;">C#</div>
<div class="abs ui" style="letter-spacing:-0.2px;left:51px;top:60px;font-weight:bold;">Paint</div>
<svg class="abs" style="left:28px;top:78.5px" width="8" height="12"><use href="#i-col" width="8" height="12"/></svg>
<svg class="abs" style="color:#424242;left:41px;top:81.5px" width="6" height="8"><use href="#i-lock" width="6" height="8"/></svg>
<svg class="abs" style="color:#424242;left:48px;top:77px" width="16" height="16"><use href="#i-wrench" width="16" height="16"/></svg>
<div class="abs ui" style="letter-spacing:-0.2px;left:69px;top:78px;">Properties</div>
<svg class="abs" style="left:28px;top:96.5px" width="8" height="12"><use href="#i-col" width="8" height="12"/></svg>
<svg class="abs" style="color:#424242;left:48px;top:96px" width="16" height="16"><use href="#i-ref" width="16" height="16"/></svg>
<div class="abs ui" style="letter-spacing:-0.5px;left:69px;top:96px;">References</div>
<svg class="abs" style="color:#424242;left:41px;top:117.5px" width="6" height="8"><use href="#i-lock" width="6" height="8"/></svg>
<svg class="abs" style="color:#424242;left:48px;top:113.5px" width="16" height="16"><use href="#i-cfg" width="16" height="16"/></svg>
<div class="abs ui" style="letter-spacing:0.12px;left:69px;top:114px;">App.config</div>
<svg class="abs" style="left:28px;top:132.5px" width="8" height="12"><use href="#i-col" width="8" height="12"/></svg>
<svg class="abs" style="color:#424242;left:41px;top:135.5px" width="6" height="8"><use href="#i-lock" width="6" height="8"/></svg>
<svg class="abs" style="color:#424242;left:48px;top:132px" width="16" height="16"><use href="#i-xaml" width="16" height="16"/></svg>
<div class="abs ui" style="letter-spacing:-0.05px;left:69px;top:132px;">App.xaml</div>
<svg class="abs" style="left:28px;top:150.5px" width="8" height="12"><use href="#i-col" width="8" height="12"/></svg>
<svg class="abs" style="color:#424242;left:41px;top:153.5px" width="6" height="8"><use href="#i-lock" width="6" height="8"/></svg>
<svg class="abs" style="color:#424242;left:48px;top:150px" width="16" height="16"><use href="#i-xaml" width="16" height="16"/></svg>
<div class="abs ui" style="letter-spacing:-0.2px;left:69px;top:150px;">ColorPanel.xaml</div>
<svg class="abs" style="left:28px;top:168.5px" width="8" height="12"><use href="#i-col" width="8" height="12"/></svg>
<svg class="abs" style="color:#424242;left:41px;top:171.5px" width="6" height="8"><use href="#i-lock" width="6" height="8"/></svg>
<div class="abs" style="left:50px;top:169.5px;font:bold 10px/12px 'Liberation Sans',sans-serif;letter-spacing:-0.6px;color:#388a34;">C#</div>
<div class="abs ui" style="letter-spacing:-0.2px;left:69px;top:168px;">EraserPaint.cs</div>
<svg class="abs" style="left:28px;top:186.5px" width="8" height="12"><use href="#i-col" width="8" height="12"/></svg>
<svg class="abs" style="color:#424242;left:41px;top:189.5px" width="6" height="8"><use href="#i-lock" width="6" height="8"/></svg>
<div class="abs" style="left:50px;top:187.5px;font:bold 10px/12px 'Liberation Sans',sans-serif;letter-spacing:-0.6px;color:#388a34;">C#</div>
<div class="abs ui" style="letter-spacing:-0.2px;left:69px;top:186px;">IPaintObjectConstructor.cs</div>
<svg class="abs" style="left:28px;top:204.5px" width="8" height="12"><use href="#i-col" width="8" height="12"/></svg>
<svg class="abs" style="color:#424242;left:41px;top:207.5px" width="6" height="8"><use href="#i-lock" width="6" height="8"/></svg>
<svg class="abs" style="color:#424242;left:48px;top:204px" width="16" height="16"><use href="#i-xaml" width="16" height="16"/></svg>
<div class="abs ui" style="letter-spacing:0px;left:69px;top:204px;">MainWindow.xaml</div>
<svg class="abs" style="left:28px;top:222.5px" width="8" height="12"><use href="#i-col" width="8" height="12"/></svg>
<svg class="abs" style="color:#424242;left:41px;top:225.5px" width="6" height="8"><use href="#i-lock" width="6" height="8"/></svg>
<div class="abs" style="left:50px;top:223.5px;font:bold 10px/12px 'Liberation Sans',sans-serif;letter-spacing:-0.6px;color:#388a34;">C#</div>
<div class="abs ui" style="letter-spacing:-0.2px;left:69px;top:222px;">PaintCanvas.cs</div>
<svg class="abs" style="left:28px;top:240.5px" width="8" height="12"><use href="#i-col" width="8" height="12"/></svg>
<svg class="abs" style="color:#424242;left:41px;top:243.5px" width="6" height="8"><use href="#i-lock" width="6" height="8"/></svg>
<div class="abs" style="left:50px;top:241.5px;font:bold 10px/12px 'Liberation Sans',sans-serif;letter-spacing:-0.6px;color:#388a34;">C#</div>
<div class="abs ui" style="letter-spacing:-0.2px;left:69px;top:240px;">PaintCanvasController.cs</div>
</div>
<div class="abs" style="left:137px;top:71px;width:17px;height:268px;background:#e8e8ec"></div>
<svg class="abs" style="left:141px;top:79px" width="9" height="6" viewBox="0 0 9 6"><path d="M0.3 5.2 L4.5 0.8 L8.7 5.2 Z" fill="#868999"/></svg>
<svg class="abs" style="left:141px;top:311px" width="9" height="6" viewBox="0 0 9 6"><path d="M0.3 0.8 L4.5 5.2 L8.7 0.8 Z" fill="#868999"/></svg>
<div class="abs" style="left:141px;top:91px;width:9px;height:125px;background:#c2c3c9"></div>
<div class="abs" style="left:0;top:322px;width:137px;height:17px;background:#e8e8ec"></div>
<svg class="abs" style="left:6px;top:326px" width="6" height="9" viewBox="0 0 6 9"><path d="M5.2 0.3 L0.8 4.5 L5.2 8.7 Z" fill="#868999"/></svg>
<svg class="abs" style="left:126px;top:326px" width="6" height="9" viewBox="0 0 6 9"><path d="M0.8 0.3 L5.2 4.5 L0.8 8.7 Z" fill="#868999"/></svg>
<div class="abs" style="left:17px;top:326px;width:56px;height:8px;background:#c2c3c9"></div>
<div class="abs" style="left:0;top:339px;width:76px;height:20px;background:#fff"></div>
<div class="abs" style="left:77px;top:340px;width:77px;height:18px;background:#9ca8dc"></div>
<div class="abs ui" style="left:5px;top:342px;letter-spacing:-0.1px;">Solution E...</div>
<div class="abs ui" style="left:84px;top:343px;letter-spacing:-0.35px;">Team Expl...</div></div>

<!-- ===== properties ===== -->
<div id="pp" class="abs" style="left:808px;top:371px;width:154px;height:260px;background:#fff;"><div class="abs ptitle" style="left:0;top:0;width:154px;height:21px;"></div>
<div class="abs ui" style="left:4px;top:4px;letter-spacing:-0.2px;">Properties</div>
<svg class="abs" style="left:105px;top:8px" width="10" height="6" viewBox="0 0 10 6"><path d="M0.8 0.6 H9 L4.9 4.6 Z" fill="#1e1e1e"/></svg>
<svg class="abs" style="left:122px;top:5px" width="9" height="12" viewBox="0 0 9 12"><path d="M2.5 1 H6.5 V6.5 M2.5 1 V6.5 M0.8 6.6 H8.2 M4.5 6.6 V11" fill="none" stroke="#1e1e1e" stroke-width="1.1"/><rect x="5.2" y="1" width="1.6" height="5.6" fill="#1e1e1e"/></svg>
<svg class="abs" style="left:138px;top:6px" width="11" height="10" viewBox="0 0 11 10"><path d="M1 1 L10 9 M10 1 L1 9" stroke="#1e1e1e" stroke-width="1.35" fill="none"/></svg>
<!-- object dropdown -->
<div class="abs" style="left:0;top:21px;width:154px;height:25px;background:#fff;"></div>
<svg class="abs" style="left:144px;top:31px" width="7" height="5" viewBox="0 0 7 5"><path d="M0.5 0.8 H6.1 L3.3 3.8 Z" fill="#1e1e1e"/></svg>
<!-- toolbar -->
<div class="abs ptool" style="left:0;top:46px;width:154px;height:26px;"></div>
<div class="abs" style="left:3px;top:47px;width:21px;height:20px;border:1px solid #4f5f9f;background:#fdfdf8;"></div>
<svg class="abs" style="left:6px;top:50px" width="16" height="16" viewBox="0 0 16 16">
<rect x="1" y="1.3" width="4.6" height="4.6" fill="#2d2d2d"/><path d="M3.3 2.3 V4.9 M2 3.6 H4.6" stroke="#fff" stroke-width="1"/>
<rect x="1" y="10.4" width="4.6" height="4.6" fill="#2d2d2d"/><path d="M3.3 11.4 V14 M2 12.7 H4.6" stroke="#fff" stroke-width="1"/>
<path d="M7.3 1.8 H11.8 M7.3 3.7 H11.8 M7.3 5.6 H11.8 M7.3 7.5 H11.8 M7.3 12.5 H11.8 M7.3 14.4 H11.8" stroke="#2d2d2d" stroke-width="1"/>
<path d="M13.3 3.7 H14.8 M13.3 5.6 H14.8 M13.3 7.5 H14.8 M13.3 9.4 H14.8 M13.3 14.4 H14.8" stroke="#2d2d2d" stroke-width="1"/>
</svg>
<!-- A-Z sort -->
<div class="abs" style="left:30px;top:51px;width:7px;height:7px;background:#2d2d2d;"></div>
<div class="abs" style="left:30px;top:51px;width:7px;height:7px;font:bold 7px/7px 'Liberation Sans',sans-serif;color:#fff;text-align:center;">A</div>
<div class="abs" style="left:30px;top:59px;width:7px;height:8px;font:bold 9px/8px 'Liberation Sans',sans-serif;color:#2d2d2d;text-align:center;">Z</div>
<svg class="abs" style="left:37px;top:53px" width="9" height="11" viewBox="0 0 9 11"><path d="M4.3 0.6 V9 M1 5.8 L4.3 9.4 L7.6 5.8" fill="none" stroke="#00539c" stroke-width="1.9"/></svg>
<div class="abs" style="left:52px;top:49px;width:1px;height:20px;background:#7f8aa6"></div>
<svg class="abs" style="color:#a3a3ab;left:58px;top:50px" width="16" height="16"><use href="#i-wrench" width="16" height="16"/></svg>
<!-- description splitter line -->
<div class="abs" style="left:0;top:197px;width:154px;height:1px;background:#e6e6ea"></div>
</div>

</body>
</html>
